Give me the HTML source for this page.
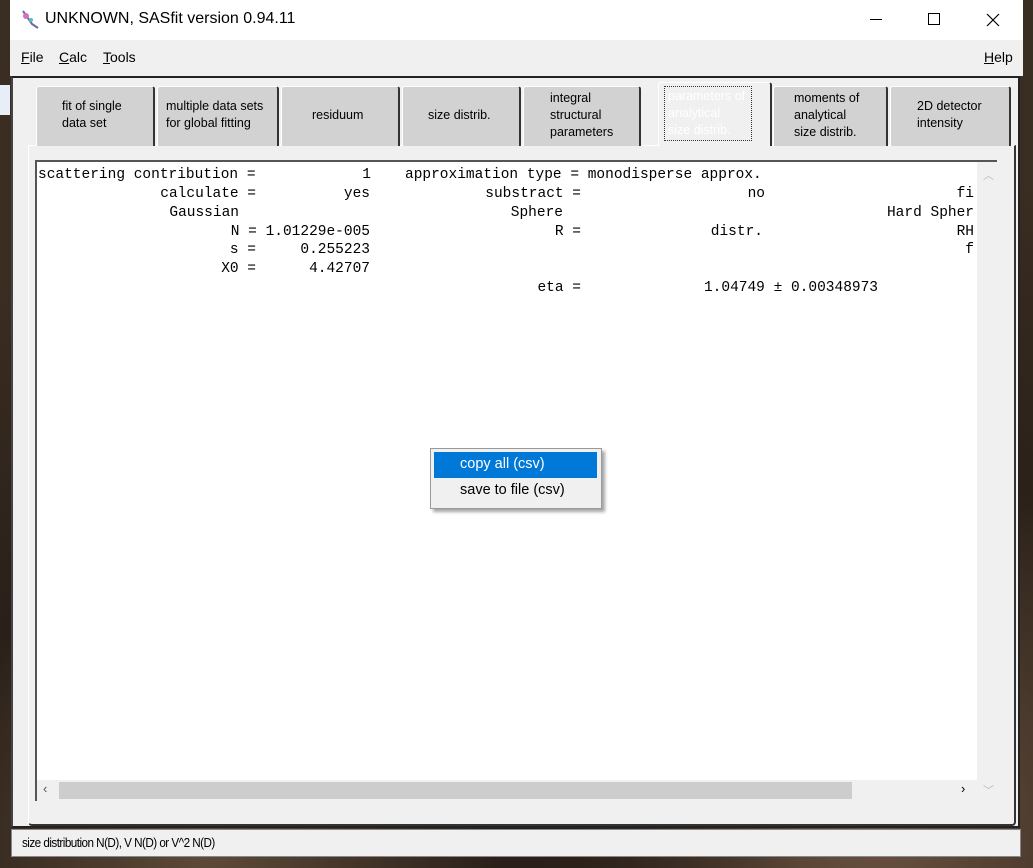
<!DOCTYPE html>
<html><head><meta charset="utf-8"><style>
*{margin:0;padding:0;box-sizing:border-box}
body{width:1033px;height:868px;position:relative;overflow:hidden;background:#2a2019;font-family:"Liberation Sans",sans-serif}
.bg{position:absolute;inset:0;background:radial-gradient(circle at 20% 98%,#5e4a38 0,#2a2019 25%,transparent 50%),radial-gradient(circle at 85% 95%,#6a5240 0,#2b2119 30%,transparent 55%),linear-gradient(90deg,#3a2d22,#241c15 50%,#3a2d22)}
.a{position:absolute}
.title{left:10px;top:0;width:1013px;height:40px;background:#fff}
.menu{left:10px;top:40px;width:1013px;height:36px;background:#f0f0f0;font-size:14px;color:#000}
.menu span{position:absolute;top:9px}
.frame{left:11px;top:76px;width:1009px;height:752px;background:#f0f0f0;border:2px solid #222;border-left-color:#444}
.tab{position:absolute;top:86px;height:60px;background:#d2d2d2;border-top:1px solid #fff;border-left:1px solid #fff;border-right:2px solid #333;border-radius:3px 3px 0 0;font-size:12.5px;color:#000;display:flex;align-items:center;line-height:17px}
.tab div{padding-left:var(--p);margin-top:-3px}
.panel{left:28px;top:145px;width:988px;height:681px;background:#f0f0f0;border-right:2px solid #333;border-bottom:2px solid #333;border-top:1px solid #fff;border-left:1px solid #fff;border-radius:0 0 4px 4px}
.txt{left:35px;top:160px;width:962px;height:641px;background:#fff;border-top:2px solid #555;border-left:2px solid #555;overflow:hidden}
.m{position:absolute;font-family:"Liberation Mono",monospace;font-size:14.5px;white-space:pre;color:#000;line-height:17px}
.r{text-align:right}
</style></head><body>
<div class="bg"></div>
<div class="a" style="left:0;top:85px;width:10px;height:30px;background:#e8eef7"></div>
<div class="a title"></div>
<svg class="a" style="left:20px;top:8px" width="22" height="22"><path d="M3 3 L12 16 L18 20" stroke="#6a6aa0" stroke-width="2" fill="none"/><circle cx="6" cy="8" r="3" fill="#d070c0"/><circle cx="11" cy="12" r="2" fill="#50c0c0"/></svg>
<div class="a" style="left:45px;top:10px;font-size:16px;color:#000">UNKNOWN, SASfit version 0.94.11</div>
<div class="a" style="left:870px;top:19px;width:12px;height:1px;background:#000"></div>
<div class="a" style="left:928px;top:13px;width:12px;height:12px;border:1px solid #000"></div>
<svg class="a" style="left:986px;top:13px" width="14" height="14"><path d="M1 1L13 13M13 1L1 13" stroke="#000" stroke-width="1.2"/></svg>
<div class="a menu"><span style="left:11px"><u>F</u>ile</span><span style="left:49px"><u>C</u>alc</span><span style="left:93px"><u>T</u>ools</span><span style="left:974px"><u>H</u>elp</span></div>
<div class="a frame"></div>
<div class="a panel"></div>
<div class="tab" style="left:36px;width:119px"><div style="--p:25px">fit of single<br>data set</div></div>
<div class="tab" style="left:157px;width:122px"><div style="--p:8px">multiple data sets<br>for global fitting</div></div>
<div class="tab" style="left:281px;width:119px"><div style="--p:30px">residuum</div></div>
<div class="tab" style="left:402px;width:119px"><div style="--p:25px">size distrib.</div></div>
<div class="tab" style="left:523px;width:118px"><div style="--p:26px">integral<br>structural<br>parameters</div></div>
<div class="tab" style="left:658px;top:82px;height:64px;width:114px;background:#f0f0f0;border-right:2px solid #333;color:#fff"><div style="margin-left:5px;border:1px dotted #333;padding:1px 3px;width:88px">parameters of<br>analytical<br>size distrib.</div></div>
<div class="tab" style="left:773px;width:115px"><div style="--p:20px">moments of<br>analytical<br>size distrib.</div></div>
<div class="tab" style="left:890px;width:121px"><div style="--p:26px">2D detector<br>intensity</div></div>
<div class="a txt">
<div class="m" style="left:1px;top:5px">scattering contribution =</div>
<div class="m r" style="right:626px;top:5px">1</div>
<div class="m" style="left:368px;top:5px">approximation type = monodisperse approx.</div>
<div class="m r" style="right:741px;top:24px">calculate =</div>
<div class="m r" style="right:627px;top:24px">yes</div>
<div class="m r" style="right:416px;top:24px">substract =</div>
<div class="m r" style="right:232px;top:24px">no</div>
<div class="m r" style="right:23px;top:24px">fi</div>
<div class="m r" style="right:758px;top:43px">Gaussian</div>
<div class="m r" style="right:434px;top:43px">Sphere</div>
<div class="m r" style="right:23px;top:43px">Hard Spher</div>
<div class="m r" style="right:627px;top:62px">N = 1.01229e-005</div>
<div class="m r" style="right:416px;top:62px">R =</div>
<div class="m r" style="right:234px;top:62px">distr.</div>
<div class="m r" style="right:23px;top:62px">RH</div>
<div class="m r" style="right:741px;top:80px">s =</div>
<div class="m r" style="right:627px;top:80px">0.255223</div>
<div class="m r" style="right:23px;top:80px">f</div>
<div class="m r" style="right:741px;top:99px">X0 =</div>
<div class="m r" style="right:627px;top:99px">4.42707</div>
<div class="m r" style="right:416px;top:118px">eta =</div>
<div class="m r" style="right:119px;top:118px">1.04749 ± 0.00348973</div>
<div class="a" style="left:940px;top:0;width:20px;height:641px;background:#f0f0f0"></div>
<div class="a" style="left:0;top:618px;width:940px;height:21px;background:#f0f0f0"></div>
<div class="a" style="left:22px;top:620px;width:793px;height:17px;background:#cdcdcd"></div>
<div class="a" style="left:6px;top:619px;font-size:13px;color:#555">‹</div>
<div class="a" style="left:924px;top:619px;font-size:13px;color:#000">›</div>
<div class="a" style="left:946px;top:5px;font-size:11px;color:#bbb">︿</div>
<div class="a" style="left:946px;top:620px;font-size:11px;color:#bbb">﹀</div>
</div>
<div class="a" style="left:430px;top:448px;width:172px;height:61px;background:#f0f0f0;border:1px solid #999;box-shadow:3px 3px 3px rgba(0,0,0,.35)"></div>
<div class="a" style="left:434px;top:452px;width:163px;height:26px;background:#0078d7"></div>
<div class="a" style="left:460px;top:456px;font-size:14.5px;color:#fff">copy all (csv)</div>
<div class="a" style="left:460px;top:482px;font-size:14.5px;color:#000">save to file (csv)</div>
<div class="a" style="left:11px;top:829px;width:1010px;height:28px;background:#f0f0f0;border:1px solid #888"></div>
<div class="a" style="left:22px;top:835px;font-size:13px;color:#000;letter-spacing:-0.6px;transform:scaleX(.9);transform-origin:left">size distribution N(D), V N(D) or V^2 N(D)</div>
</body></html>
